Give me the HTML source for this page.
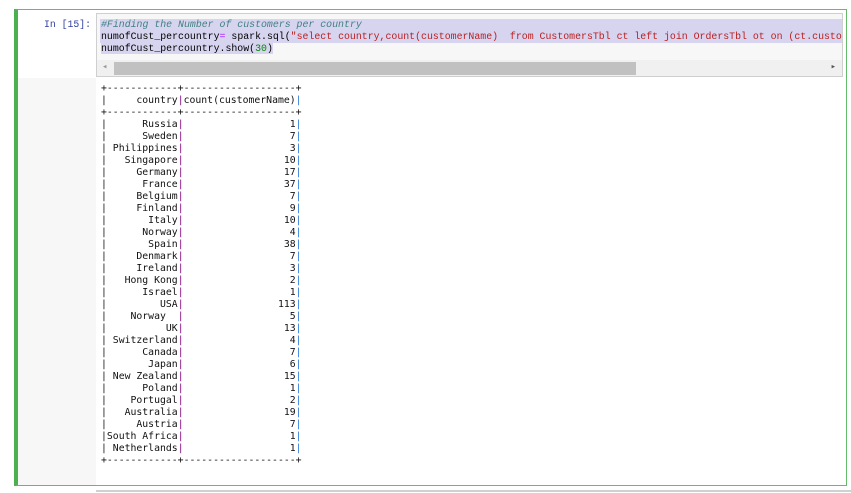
<!DOCTYPE html>
<html><head><style>
body{margin:0;width:851px;height:493px;background:#fff;position:relative;overflow:hidden;font-family:"Liberation Mono",monospace}
.cell{position:absolute;left:14px;top:9px;width:833px;height:477px;border:1px solid #66bb6a;border-left:4px solid #4caf50;box-sizing:border-box}
.prompt{position:absolute;left:19px;top:19px;width:72px;text-align:right;color:#303f9f;font-size:9.8px;line-height:12px}
.inp{position:absolute;left:96px;top:13px;width:747px;height:64px;border:1px solid #cfcfcf;background:#f7f7f7;box-sizing:border-box;overflow:hidden}
.code{position:absolute;left:4px;top:5px;width:742px;font-size:9.9px;line-height:12px;white-space:pre;color:#000}
.sel{background:#d7d4f0}
.blk{display:block;background:#d7d4f0;margin-left:-1px;padding-left:1px}
.sb{position:absolute;left:0;top:46px;width:745px;height:16px;background:#f0f0f0}
.thumb{position:absolute;left:17px;top:2px;width:522px;height:13px;background:#c1c1c1}
.outl{position:absolute;left:18px;top:78px;width:78px;height:407px;background:#f7f7f7}
pre{position:absolute;left:101px;top:83px;margin:0;font-size:9.8px;line-height:12px;color:#111}
.a{color:#800080}.b{color:#2a7ad8}
.bot{position:absolute;left:96px;top:490px;width:755px;height:2px;background:#d0d0d0}
</style></head><body>
<div class="cell"></div>
<div class="outl"></div>
<div class="prompt">In [15]:</div>
<div class="inp">
<div class="code"><span class="blk"><i style="color:#408080">#Finding the Number of customers per country</i></span><span class="blk">numofCust_percountry<span style="color:#aa22ff">=</span> spark.sql(<span style="color:#ba2121">"select country,count(customerName)  from CustomersTbl ct left join OrdersTbl ot on (ct.customerNumber=ot.customerNumber) group by country"</span>)</span><span class="sel">numofCust_percountry.show(<span style="color:#080">30</span>)</span></div>
<div class="sb"><span style="position:absolute;left:5px;top:2px;font-size:9px;color:#999">◂</span><div class="thumb"></div><span style="position:absolute;right:6px;top:2px;font-size:9px;color:#555">▸</span></div>
</div>
<pre>+------------+-------------------+
|     country<span class="a">|</span>count(customerName)<span class="b">|</span>
+------------+-------------------+
|      Russia<span class="a">|</span>                  1<span class="b">|</span>
|      Sweden<span class="a">|</span>                  7<span class="b">|</span>
| Philippines<span class="a">|</span>                  3<span class="b">|</span>
|   Singapore<span class="a">|</span>                 10<span class="b">|</span>
|     Germany<span class="a">|</span>                 17<span class="b">|</span>
|      France<span class="a">|</span>                 37<span class="b">|</span>
|     Belgium<span class="a">|</span>                  7<span class="b">|</span>
|     Finland<span class="a">|</span>                  9<span class="b">|</span>
|       Italy<span class="a">|</span>                 10<span class="b">|</span>
|      Norway<span class="a">|</span>                  4<span class="b">|</span>
|       Spain<span class="a">|</span>                 38<span class="b">|</span>
|     Denmark<span class="a">|</span>                  7<span class="b">|</span>
|     Ireland<span class="a">|</span>                  3<span class="b">|</span>
|   Hong Kong<span class="a">|</span>                  2<span class="b">|</span>
|      Israel<span class="a">|</span>                  1<span class="b">|</span>
|         USA<span class="a">|</span>                113<span class="b">|</span>
|    Norway  <span class="a">|</span>                  5<span class="b">|</span>
|          UK<span class="a">|</span>                 13<span class="b">|</span>
| Switzerland<span class="a">|</span>                  4<span class="b">|</span>
|      Canada<span class="a">|</span>                  7<span class="b">|</span>
|       Japan<span class="a">|</span>                  6<span class="b">|</span>
| New Zealand<span class="a">|</span>                 15<span class="b">|</span>
|      Poland<span class="a">|</span>                  1<span class="b">|</span>
|    Portugal<span class="a">|</span>                  2<span class="b">|</span>
|   Australia<span class="a">|</span>                 19<span class="b">|</span>
|     Austria<span class="a">|</span>                  7<span class="b">|</span>
|South Africa<span class="a">|</span>                  1<span class="b">|</span>
| Netherlands<span class="a">|</span>                  1<span class="b">|</span>
+------------+-------------------+</pre>
<div class="bot"></div>
</body></html>
